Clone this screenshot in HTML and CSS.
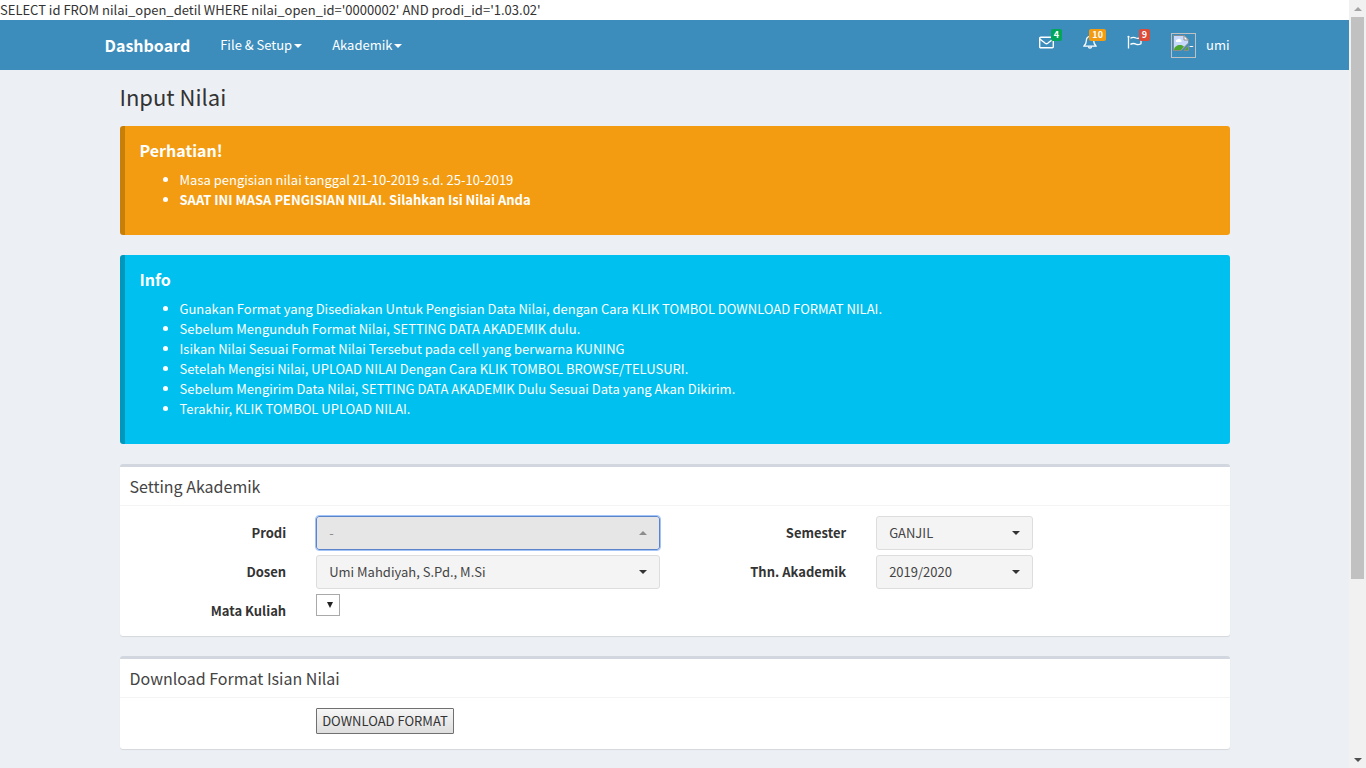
FILE: index.html
```html
<!DOCTYPE html>
<html lang="id">
  <head>
    <meta charset="UTF-8" />
    <meta name="viewport" content="width=device-width, initial-scale=1.0" />
    <title>Input Nilai</title>
    <link rel="stylesheet" href="styles.css">
  </head>
  <body>
    <div class="page">
      <div class="query">SELECT id FROM nilai_open_detil WHERE nilai_open_id='0000002' AND prodi_id='1.03.02'</div>

      <header class="navbar">
        <div class="container navbar-inner">
          <a class="brand" href="#">Dashboard</a>
          <nav class="menu">
            <a href="#">File &amp; Setup<span class="caret"></span></a>
            <a href="#">Akademik<span class="caret"></span></a>
          </nav>
          <div class="navbar-right">
            <a class="notif" href="#" aria-label="Pesan">
              <svg width="15" height="14" viewBox="0 0 15 14" fill="none" stroke="#fff" stroke-width="1.4">
                <rect x="0.7" y="2.200" width="13.6" height="10.6" rx="1" />
                <path d="M1 4c1.500 1.700 3.500 2.800 5.200 4.200.8.6 1.800.6 2.600 0C10.500 6.800 12.500 5.700 14 4" />
              </svg>
              <span class="badge green">4</span>
            </a>
            <a class="notif" href="#" aria-label="Notifikasi">
              <svg width="14" height="14" viewBox="0 0 14 14" fill="none" stroke="#fff" stroke-width="1.3" stroke-linejoin="round">
                <path d="M7 1.300C4.500 1.600 3.400 3.300 3.400 5.200 3.400 8.200 2.500 9.700.8 11.200H13.200C11.500 9.700 10.600 8.200 10.600 5.200 10.600 3.300 9.500 1.600 7 1.300z" />
                <path d="M5.500 11.400a1.500 1.700 0 0 0 3 0" />
                <path d="M7 0v1.500" />
              </svg>
              <span class="badge orange">10</span>
            </a>
            <a class="notif" href="#" aria-label="Tugas">
              <svg width="15" height="14" viewBox="0 0 15 14" fill="none" stroke="#fff" stroke-width="1.3">
                <path d="M1.500 1v12.500" />
                <circle cx="1.500" cy="1.800" r="1" fill="#fff" stroke="none" />
                <path d="M3.400 3.200c2.400-1.400 3.800-1.200 5.600-.2 1.700.8 3 .6 5-.5v6.200c-2 1.200-3.300 1.200-5 .4-1.800-.9-3.200-1.100-5.600.3" />
              </svg>
              <span class="badge red">9</span>
            </a>
            <a class="user" href="#">
              <span class="avatar">
                <svg width="16" height="16" viewBox="0 0 16 16">
                  <path d="M.5.500H11L15.500 5V8L8 15.500H.5z" fill="#c8dafb" stroke="#8c8c8c" />
                  <path d="M11 .5V5h4.500z" fill="#fff" stroke="#8c8c8c" />
                  <path d="M3 6.500a1.500 1.500 0 0 1 1.500-2 2 2 0 0 1 3.500.5 1.200 1.200 0 0 1 0 2H3z" fill="#fff" />
                  <path d="M1 15c0-3 3-5 6-5 2 0 3 .6 4 1.500L8 15z" fill="#4ea62f" />
                  <path d="M15.500 10.500v5H11z" fill="#4ea62f" stroke="#8c8c8c" />
                </svg>
                <span>-</span>
              </span>
              umi
            </a>
          </div>
        </div>
      </header>

      <main class="container content">
        <h1>Input Nilai</h1>

        <div class="callout warning">
          <h4>Perhatian!</h4>
          <ul>
            <li>Masa pengisian nilai tanggal 21-10-2019 s.d. 25-10-2019</li>
            <li><b>SAAT INI MASA PENGISIAN NILAI. Silahkan Isi Nilai Anda</b></li>
          </ul>
        </div>

        <div class="callout info">
          <h4>Info</h4>
          <ul>
            <li>Gunakan Format yang Disediakan Untuk Pengisian Data Nilai, dengan Cara KLIK TOMBOL DOWNLOAD FORMAT NILAI.</li>
            <li>Sebelum Mengunduh Format Nilai, SETTING DATA AKADEMIK dulu.</li>
            <li>Isikan Nilai Sesuai Format Nilai Tersebut pada cell yang berwarna KUNING</li>
            <li>Setelah Mengisi Nilai, UPLOAD NILAI Dengan Cara KLIK TOMBOL BROWSE/TELUSURI.</li>
            <li>Sebelum Mengirim Data Nilai, SETTING DATA AKADEMIK Dulu Sesuai Data yang Akan Dikirim.</li>
            <li>Terakhir, KLIK TOMBOL UPLOAD NILAI.</li>
          </ul>
        </div>

        <section class="box">
          <h3>Setting Akademik</h3>
          <form class="box-body">
            <div class="row">
              <label for="prodi">Prodi</label>
              <div class="select open">
                <select id="prodi">
                  <option>-</option>
                </select>
              </div>
              <label for="semester">Semester</label>
              <div class="select">
                <select id="semester">
                  <option>GANJIL</option>
                  <option>GENAP</option>
                </select>
              </div>
            </div>
            <div class="row">
              <label for="dosen">Dosen</label>
              <div class="select">
                <select id="dosen">
                  <option>Umi Mahdiyah, S.Pd., M.Si</option>
                </select>
              </div>
              <label for="tahun">Thn. Akademik</label>
              <div class="select">
                <select id="tahun">
                  <option>2019/2020</option>
                </select>
              </div>
            </div>
            <div class="row">
              <label for="matkul">Mata Kuliah</label>
              <div class="select-small">
                <select id="matkul"></select>
              </div>
            </div>
          </form>
        </section>

        <section class="box">
          <h3>Download Format Isian Nilai</h3>
          <form class="box-body">
            <div class="row">
              <div class="action">
                <button type="button">DOWNLOAD FORMAT</button>
              </div>
            </div>
          </form>
        </section>
      </main>
    </div>

    <div class="scrollbar">
      <span class="arrow up"></span>
      <span class="track"><span class="thumb"></span></span>
      <span class="arrow down"></span>
    </div>
  </body>
</html>
```
FILE: styles.css
```css
* {
  box-sizing: border-box;
}
body {
  margin: 0;
  display: flex;
  align-items: flex-start;
  background-color: #ecf0f5;
  color: #333;
  font-family: "Noto Sans CJK SC", "Open Sans", sans-serif;
  font-size: 13px;
  line-height: 20px;
}
a {
  color: #fff;
  text-decoration: none;
}
h1,
h3,
h4,
ul {
  margin: 0;
  font-weight: normal;
}
.page {
  flex: 1;
  min-width: 0;
  min-height: 100vh;
}
.query {
  background-color: #fff;
}
.container {
  max-width: 1140px;
  margin: 0 auto;
}

/* navbar */
.navbar {
  background-color: #3c8dbc;
  color: #fff;
}
.navbar-inner {
  display: flex;
  height: 50px;
}
.brand {
  padding: 15px 15px 15px 0;
  font-size: 16px;
  font-weight: bold;
}
.menu,
.navbar-right {
  display: flex;
}
.menu a {
  padding: 15px;
}
.caret {
  display: inline-block;
  margin-left: 2px;
  vertical-align: middle;
  border-top: 4px solid;
  border-left: 4px solid transparent;
  border-right: 4px solid transparent;
}
.navbar-right {
  margin-left: auto;
}
.notif {
  position: relative;
  width: 44px;
  padding: 15px;
}
.notif svg {
  display: block;
}
.badge {
  position: absolute;
  top: 9px;
  right: 6px;
  padding: 0 3px;
  border-radius: 2px;
  font-size: 9px;
  font-weight: bold;
  line-height: 12px;
}
.green {
  background-color: #00a65a;
}
.orange {
  background-color: #f39c12;
}
.red {
  background-color: #dd4b39;
}
.user {
  display: flex;
  align-items: center;
  gap: 10px;
  padding: 0 15px;
}
.avatar {
  display: flex;
  width: 25px;
  height: 25px;
  padding: 1px;
  border: 1px solid #c0c0c0;
  overflow: hidden;
}
.avatar svg {
  flex: none;
}

/* content */
.content {
  padding: 15px;
}
h1 {
  margin-bottom: 19px;
  font-size: 22px;
  line-height: 22px;
}
.callout {
  margin-bottom: 20px;
  padding: 15px 30px 15px 15px;
  border-left: 5px solid;
  border-radius: 3px;
  color: #fff;
}
.callout h4 {
  margin-bottom: 10px;
  font-size: 16px;
  font-weight: bold;
  line-height: 19px;
}
.callout ul {
  margin-bottom: 10px;
  padding-left: 40px;
}
.warning {
  background-color: #f39c12;
  border-color: #c87f0a;
}
.info {
  background-color: #00c0ef;
  border-color: #0097bc;
}
.box {
  margin-bottom: 20px;
  border-top: 3px solid #d2d6de;
  border-radius: 3px;
  background-color: #fff;
  box-shadow: 0 1px 1px rgba(0, 0, 0, 0.1);
}
.box h3 {
  padding: 10px;
  border-bottom: 1px solid #f4f4f4;
  color: #444;
  font-size: 16px;
  line-height: 18px;
}
.box-body {
  padding: 10px;
}
.row {
  display: grid;
  grid-template-columns: 2fr 4fr 2fr 2fr 2fr;
  margin: 0 -15px 5px;
}
.row > * {
  margin: 0 15px;
}
.row label {
  padding-top: 7px;
  font-weight: bold;
  text-align: right;
}
.select {
  position: relative;
}
select,
button {
  color: #444;
  font: inherit;
}
.select select {
  appearance: none;
  display: block;
  width: 100%;
  height: 34px;
  padding: 0 12px;
  border: 1px solid #ddd;
  border-radius: 3px;
  background-color: #f4f4f4;
}
.select::after {
  content: "";
  position: absolute;
  top: 15px;
  right: 13px;
  border-top: 4px solid #333;
  border-left: 4px solid transparent;
  border-right: 4px solid transparent;
  pointer-events: none;
}
.open select {
  border-color: #5b84cb;
  outline: 1px solid #a3c4f8;
  background-color: #e6e6e6;
  color: #8c8c8c;
}
.open::after {
  border-top: 0;
  border-bottom: 4px solid #8c8c8c;
}
.select-small {
  position: relative;
  width: 24px;
  height: 22px;
}
.select-small select {
  appearance: none;
  display: block;
  width: 24px;
  height: 22px;
  border: 1px solid #a9a9a9;
  border-radius: 0;
  background-color: #fff;
}
.select-small::after {
  content: "";
  position: absolute;
  top: 8px;
  right: 7px;
  border-top: 6px solid #222;
  border-left: 3px solid transparent;
  border-right: 3px solid transparent;
  pointer-events: none;
}
.action {
  grid-column: 2;
}
button {
  display: block;
  height: 26px;
  padding: 0 5px;
  border: 1px solid #707070;
  border-radius: 1px;
  background: linear-gradient(#f6f6f6, #dedede);
  color: #333;
}

/* scrollbar */
.scrollbar {
  position: sticky;
  top: 0;
  display: flex;
  flex-direction: column;
  width: 17px;
  height: 100vh;
  background-color: #f1f1f1;
}
.arrow {
  display: flex;
  align-items: center;
  justify-content: center;
  height: 17px;
}
.arrow::after {
  content: "";
  border-left: 4px solid transparent;
  border-right: 4px solid transparent;
}
.up::after {
  border-bottom: 4px solid #a3a3a3;
}
.down::after {
  border-top: 4px solid #505050;
}
.track {
  flex: 1;
  padding: 0 2px;
}
.thumb {
  display: block;
  height: 76.5%;
  background-color: #c1c1c1;
}
```
